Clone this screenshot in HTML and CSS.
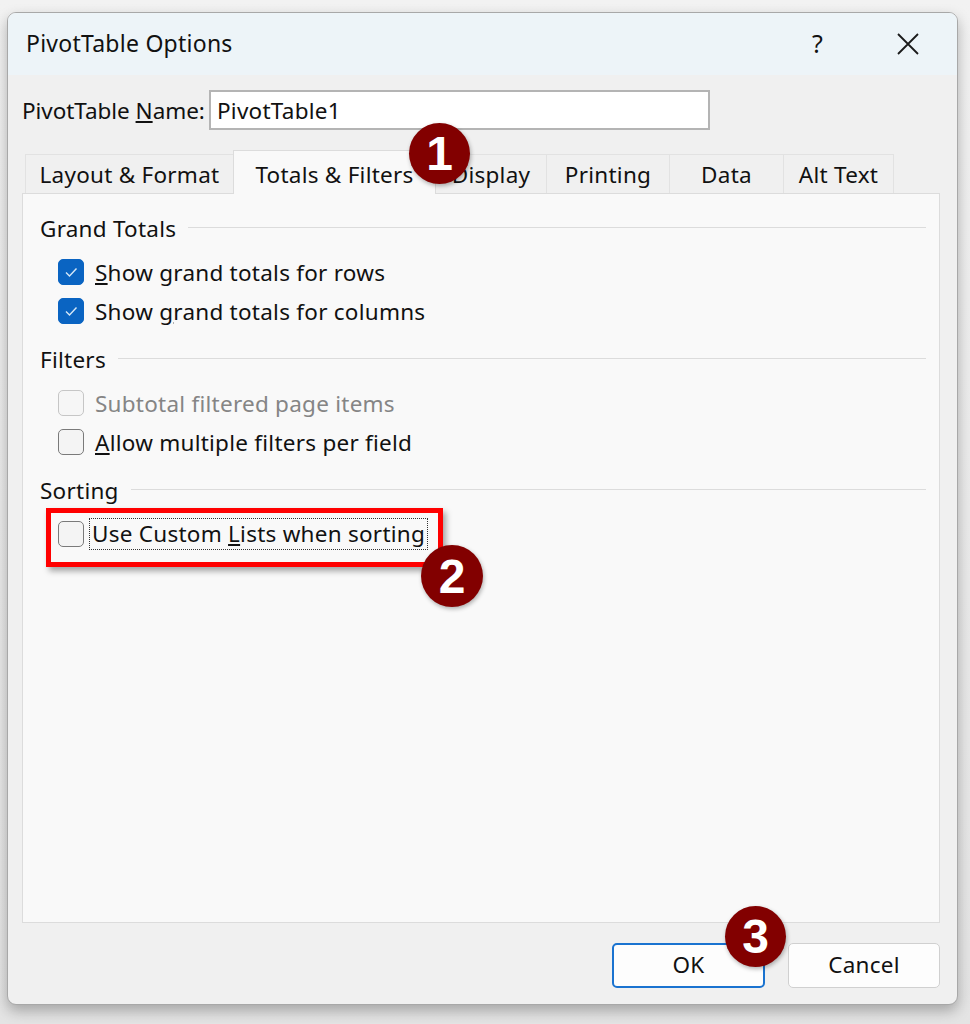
FILE: index.html
```html
<!DOCTYPE html>
<html>
<head>
<meta charset="utf-8">
<link rel="stylesheet" href="styles.css">
</head>
<body>
<div class="window">
  <div class="titlebar">
    <span class="title">PivotTable Options</span>
    <span class="help">?</span>
    <svg class="close" width="22" height="22" viewBox="0 0 22 22"><path d="M1 1 L21 21 M21 1 L1 21" stroke="#1a1a1a" stroke-width="1.8" fill="none"/></svg>
  </div>
  <div class="content">
    <div class="name-row">
      <span class="label">PivotTable <u>N</u>ame:</span>
      <div class="input">PivotTable1</div>
    </div>
    <div class="tabs">
      <div class="tab w1">Layout &amp; Format</div>
      <div class="tab active w2">Totals &amp; Filters</div>
      <div class="tab w3">Display</div>
      <div class="tab w4">Printing</div>
      <div class="tab w5">Data</div>
      <div class="tab w6">Alt Text</div>
    </div>
    <div class="panel">
      <div class="group">
        <div class="heading"><span>Grand Totals</span><i class="rule"></i></div>
        <div class="row"><span class="cb checked"><svg width="26" height="26" viewBox="0 0 26 26"><path d="M8 13.5 L11.5 17 L18.5 9.5" stroke="#d6e8f7" stroke-width="1.4" fill="none"/></svg></span><span><u>S</u>how grand totals for rows</span></div>
        <div class="row"><span class="cb checked"><svg width="26" height="26" viewBox="0 0 26 26"><path d="M8 13.5 L11.5 17 L18.5 9.5" stroke="#d6e8f7" stroke-width="1.4" fill="none"/></svg></span><span>Show <u>g</u>rand totals for columns</span></div>
      </div>
      <div class="group">
        <div class="heading"><span>Filters</span><i class="rule"></i></div>
        <div class="row disabled"><span class="cb"></span><span>Subtotal filtered page items</span></div>
        <div class="row"><span class="cb"></span><span><u>A</u>llow multiple filters per field</span></div>
      </div>
      <div class="group">
        <div class="heading"><span>Sorting</span><i class="rule"></i></div>
        <div class="row"><span class="cb"></span><span class="focus">Use Custom <u>L</u>ists when sorting</span></div>
      </div>
      <div class="highlight"></div>
      <div class="badge b2">2</div>
    </div>
    <div class="buttons">
      <div class="btn default">OK</div>
      <div class="btn">Cancel</div>
      <div class="badge b3">3</div>
    </div>
    <div class="badge b1">1</div>
  </div>
</div>
</body>
</html>
```
FILE: styles.css
```css
html, body {
  margin: 0;
  padding: 0;
}
body {
  width: 970px;
  height: 1024px;
  background: linear-gradient(#f2f2f2, #e4e4e4);
  font-family: "Noto Sans", "Open Sans", sans-serif;
  font-size: 22.5px;
  letter-spacing: 0.25px;
  color: #111;
  overflow: hidden;
}
.window {
  position: relative;
  margin: 12px 0 0 7px;
  width: 949px;
  height: 991px;
  border: 1px solid #a8a8a8;
  border-radius: 9px;
  background: #f0f0f0;
  box-shadow: 0 6px 14px rgba(0,0,0,0.28);
  overflow: hidden;
  display: flex;
  flex-direction: column;
}
.titlebar {
  height: 62px;
  background: #edf4f8;
  display: flex;
  align-items: center;
  padding-left: 18px;
  flex-shrink: 0;
}
.title {
  font-size: 23px;
  flex: 1;
  padding-bottom: 2px;
}
.help {
  font-size: 25px;
  margin-right: 74px;
  padding-bottom: 2px;
}
.close {
  margin-right: 38px;
}
.content {
  position: relative;
  padding: 15px 17px 17px 14px;
  display: flex;
  flex-direction: column;
  flex: 1;
}
.name-row {
  display: flex;
  align-items: center;
  height: 40px;
}
.label {
  width: 187px;
  white-space: nowrap;
  letter-spacing: -0.05px;
}
.input {
  width: 491px;
  height: 36px;
  border: 2px solid #b4b4b4;
  background: #fff;
  padding-left: 6px;
  display: flex;
  align-items: center;
}
.tabs {
  margin-top: 20px;
  margin-left: 3px;
  height: 43px;
  display: flex;
  align-items: flex-end;
  position: relative;
  z-index: 2;
}
.tab {
  height: 39px;
  box-sizing: border-box;
  border: 1px solid #e2e2e2;
  border-bottom: none;
  background: #f0f0f0;
  display: flex;
  align-items: center;
  justify-content: center;
  margin-right: -1px;
  padding-top: 1px;
  white-space: nowrap;
}
.tab.active {
  height: 44px;
  margin-bottom: -1px;
  background: #f9f9f9;
  border-color: #dcdcdc;
  position: relative;
  padding-top: 4px;
}
.w1 { width: 209px; }
.w2 { width: 203px; }
.w3 { width: 112px; }
.w4 { width: 124px; }
.w5 { width: 115px; }
.w6 { width: 111px; }
.panel {
  position: relative;
  height: 730px;
  box-sizing: border-box;
  background: #f9f9f9;
  border: 1px solid #dcdcdc;
  padding: 18px 13px 0 17px;
}
.group {
  margin-bottom: 12px;
}
.heading {
  display: flex;
  align-items: center;
  height: 32px;
}
.rule {
  flex: 1;
  height: 1px;
  background: #dcdcdc;
  margin-left: 12px;
  margin-top: -2px;
}
.row {
  display: flex;
  align-items: center;
  height: 40px;
  padding-left: 18px;
  white-space: nowrap;
}
.heading + .row {
  margin-top: 8px;
}
.heading + .row + .row {
  margin-top: -1px;
}
.cb {
  width: 26px;
  height: 26px;
  box-sizing: border-box;
  border: 1.5px solid #7a7a7a;
  border-radius: 5px;
  background: #f4f4f4;
  margin-right: 11px;
  flex-shrink: 0;
  display: flex;
}
.cb.checked {
  background: #0a64c2;
  border-color: #0a64c2;
}
.cb.checked svg {
  margin: -1.5px;
}
.disabled {
  color: #858585;
}
.disabled .cb {
  border-color: #c6c6c6;
  background: #f6f6f6;
}
.disabled + .row {
  margin-top: 0;
}
.focus {
  outline: 1.5px dotted #333;
  outline-offset: 1px;
  padding: 0 1px;
  margin-left: -4px;
  line-height: 28px;
}
.highlight {
  position: absolute;
  left: 23px;
  top: 314px;
  width: 397px;
  height: 59px;
  box-sizing: border-box;
  border: 5px solid #ff0000;
  box-shadow: 3px 4px 6px rgba(0,0,0,0.35);
}
.badge {
  position: absolute;
  width: 62px;
  height: 62px;
  border-radius: 50%;
  background: #820000;
  color: #fff;
  font-family: "Liberation Sans", Arial, sans-serif;
  font-weight: bold;
  font-size: 48px;
  letter-spacing: 0;
  display: flex;
  align-items: center;
  justify-content: center;
  box-shadow: 1px 2px 4px rgba(0,0,0,0.3);
  z-index: 5;
}
.b1 {
  left: 401px;
  top: 48px;
  width: 61px;
  height: 61px;
}
.b2 {
  left: 398px;
  top: 351px;
}
.b3 {
  left: 703px;
  top: -37px;
  width: 61px;
  height: 61px;
}
.buttons {
  position: relative;
  margin-top: 20px;
  display: flex;
  justify-content: flex-end;
  gap: 23px;
}
.btn {
  width: 152px;
  height: 45px;
  box-sizing: border-box;
  border: 1px solid #d0d0d0;
  border-radius: 5px;
  background: #fdfdfd;
  display: flex;
  align-items: center;
  justify-content: center;
  padding-bottom: 2px;
}
.btn.default {
  width: 153px;
  border: 2px solid #1a73d0;
}
```
